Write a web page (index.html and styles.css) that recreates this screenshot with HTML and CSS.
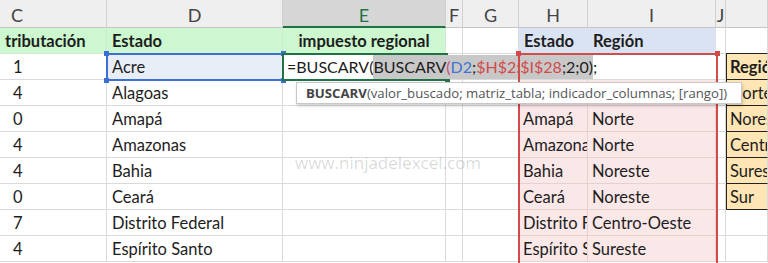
FILE: index.html
```html
<!DOCTYPE html>
<html lang="es">

<head>
    <meta charset="UTF-8">
    <title>BUSCARV anidado</title>
    <link rel="stylesheet" href="styles.css">
</head>

<body>
    <div class="wrap">
        <div class="sheet">
            <!-- cabecera de columnas -->
            <div class="col-head first">C</div>
            <div class="col-head">D</div>
            <div class="col-head active">E</div>
            <div class="col-head">F</div>
            <div class="col-head">G</div>
            <div class="col-head">H</div>
            <div class="col-head">I</div>
            <div class="col-head">J</div>
            <div class="col-head"></div>

            <!-- fila 1 -->
            <div class="cell green bold">tributación</div>
            <div class="cell green bold">Estado</div>
            <div class="cell green bold center">impuesto regional</div>
            <div class="cell"></div>
            <div class="cell"></div>
            <div class="cell blue bold">Estado</div>
            <div class="cell blue bold">Región</div>
            <div class="cell"></div>
            <div class="cell k-top"></div>

            <!-- fila 2 -->
            <div class="cell num">1</div>
            <div class="cell picked">Acre</div>
            <div class="cell"></div>
            <div class="cell"></div>
            <div class="cell"></div>
            <div class="cell"></div>
            <div class="cell"></div>
            <div class="cell"></div>
            <div class="cell beige bold">Región</div>

            <!-- fila 3 -->
            <div class="cell num">4</div>
            <div class="cell">Alagoas</div>
            <div class="cell"></div>
            <div class="cell"></div>
            <div class="cell"></div>
            <div class="cell pink">Alagoas</div>
            <div class="cell pink">Noreste</div>
            <div class="cell"></div>
            <div class="cell beige">Norte</div>

            <!-- fila 4 -->
            <div class="cell num">0</div>
            <div class="cell">Amapá</div>
            <div class="cell"></div>
            <div class="cell"></div>
            <div class="cell"></div>
            <div class="cell pink">Amapá</div>
            <div class="cell pink">Norte</div>
            <div class="cell"></div>
            <div class="cell beige">Noreste</div>

            <!-- fila 5 -->
            <div class="cell num">4</div>
            <div class="cell">Amazonas</div>
            <div class="cell"></div>
            <div class="cell"></div>
            <div class="cell"></div>
            <div class="cell pink">Amazonas</div>
            <div class="cell pink">Norte</div>
            <div class="cell"></div>
            <div class="cell beige">Centro-Oeste</div>

            <!-- fila 6 -->
            <div class="cell num">4</div>
            <div class="cell">Bahia</div>
            <div class="cell"></div>
            <div class="cell"></div>
            <div class="cell"></div>
            <div class="cell pink">Bahia</div>
            <div class="cell pink">Noreste</div>
            <div class="cell"></div>
            <div class="cell beige">Sureste</div>

            <!-- fila 7 -->
            <div class="cell num">0</div>
            <div class="cell">Ceará</div>
            <div class="cell"></div>
            <div class="cell"></div>
            <div class="cell"></div>
            <div class="cell pink">Ceará</div>
            <div class="cell pink">Noreste</div>
            <div class="cell"></div>
            <div class="cell beige">Sur</div>

            <!-- fila 8 -->
            <div class="cell num">7</div>
            <div class="cell">Distrito Federal</div>
            <div class="cell"></div>
            <div class="cell"></div>
            <div class="cell"></div>
            <div class="cell pink">Distrito Federal</div>
            <div class="cell pink">Centro-Oeste</div>
            <div class="cell"></div>
            <div class="cell"></div>

            <!-- fila 9 -->
            <div class="cell num">4</div>
            <div class="cell">Espírito Santo</div>
            <div class="cell"></div>
            <div class="cell"></div>
            <div class="cell"></div>
            <div class="cell pink">Espírito Santo</div>
            <div class="cell pink">Sureste</div>
            <div class="cell"></div>
            <div class="cell"></div>
        </div>

        <!-- capas sobre la hoja -->
        <div class="sel-frame">
            <span class="hdl tl"></span><span class="hdl tr"></span>
            <span class="hdl bl"></span><span class="hdl br"></span>
        </div>
        <div class="edit-frame"><span class="hdl br"></span></div>
        <div class="editor">=BUSCARV(<span class="inner">BUSCARV<span class="paren">(</span><span class="ref-blue">D2</span>;<span class="ref-red">$H$2:$I$28</span>;2;0)</span>;</div>
        <div class="range">
            <span class="hdl tl"></span><span class="hdl tr"></span>
        </div>
        <div class="tip"><b>BUSCARV</b>(valor_buscado; matriz_tabla; indicador_columnas; [rango])</div>
        <div class="mark">www.ninjadelexcel.com</div>
    </div>
</body>

</html>
```

FILE: styles.css
```css
body {
    margin: 0;
    background: #fff;
    overflow: hidden;
    font-family: Lato, "Liberation Sans", sans-serif;
    color: #1d1d1d;
}

.wrap {
    position: relative;
    width: 768px;
    height: 263px;
    overflow: hidden;
}

.sheet {
    display: grid;
    grid-template-columns: 107px 176px 163px 17px 56px 69px 128px 10px 42px;
    grid-template-rows: 28px repeat(9, 26px);
}

.col-head {
    box-sizing: border-box;
    background: #efefef;
    border-right: 1px solid #d0d0d0;
    border-bottom: 1px solid #c4c4c4;
    color: #444;
    font-size: 18px;
    line-height: 30px;
    text-align: center;
}

.col-head.first {
    text-align: left;
    padding-left: 11px;
}

.col-head.active {
    background: #d6d6d6;
    color: #217346;
    border-bottom: 2px solid #217346;
}

.cell {
    box-sizing: border-box;
    border-right: 1px solid #dadada;
    border-bottom: 1px solid #dadada;
    font-size: 16.5px;
    line-height: 26px;
    padding-left: 5px;
    white-space: nowrap;
    overflow: hidden;
}

.bold {
    font-weight: bold;
}

.center {
    text-align: center;
    padding-left: 0;
}

.num {
    padding-left: 13px;
}

.green {
    background: #ccf7cf;
    border-color: #d2e8d3;
}

.blue {
    background: #dae3f3;
    border-color: #dae3f3;
}

.picked {
    background: #e8eef8;
}

.pink {
    background: #fae7e7;
    border-color: #e6d0d0;
    padding-left: 4px;
}

.k-top {
    border-bottom: 1px solid #222;
}

.beige {
    background: #ffe6b4;
    border-left: 1px solid #222;
    border-bottom: 1px solid #222;
    padding-left: 3px;
}

/* marcos y capas */
.sel-frame,
.edit-frame,
.range {
    position: absolute;
    box-sizing: border-box;
}

.sel-frame {
    left: 106px;
    top: 53px;
    width: 178px;
    height: 28px;
    border: 2px solid #3b6fd1;
}

.edit-frame {
    left: 282px;
    top: 53px;
    width: 166px;
    height: 28px;
    border: 2px solid #217346;
}

.range {
    left: 518px;
    top: 53px;
    width: 200px;
    height: 240px;
    border: 2px solid #d24b4b;
}

.hdl {
    position: absolute;
    width: 5px;
    height: 5px;
    background: #3b6fd1;
}

.edit-frame .hdl {
    background: #217346;
}

.range .hdl {
    background: #d24b4b;
}

.hdl.tl { left: -4px; top: -4px; }
.hdl.tr { right: -4px; top: -4px; }
.hdl.bl { left: -4px; bottom: -4px; }
.hdl.br { right: -4px; bottom: -4px; }

.editor {
    position: absolute;
    left: 284px;
    top: 55px;
    width: 432px;
    height: 24px;
    background: #fff;
    padding-left: 3px;
    box-sizing: border-box;
    font-size: 16px;
    line-height: 24px;
    white-space: nowrap;
}

.inner {
    display: inline-block;
    background: #c8c8c8;
}

.paren {
    color: #c9507a;
}

.ref-blue {
    color: #3f73d4;
}

.ref-red {
    color: #d24b4b;
}

.tip {
    position: absolute;
    left: 296px;
    top: 82px;
    width: 446px;
    height: 22px;
    box-sizing: border-box;
    background: #fff;
    border: 1px solid #c8c8c8;
    box-shadow: 1px 2px 3px rgba(0, 0, 0, 0.18);
    padding-left: 9px;
    font-family: "Open Sans", "Liberation Sans", sans-serif;
    font-size: 13.2px;
    line-height: 20px;
    color: #555;
    white-space: nowrap;
}

.tip b {
    color: #444;
}

.mark {
    position: absolute;
    left: 295px;
    top: 151px;
    font-family: "Open Sans", "Liberation Sans", sans-serif;
    font-size: 17px;
    color: rgba(0, 0, 0, 0.16);
    white-space: nowrap;
}
```
